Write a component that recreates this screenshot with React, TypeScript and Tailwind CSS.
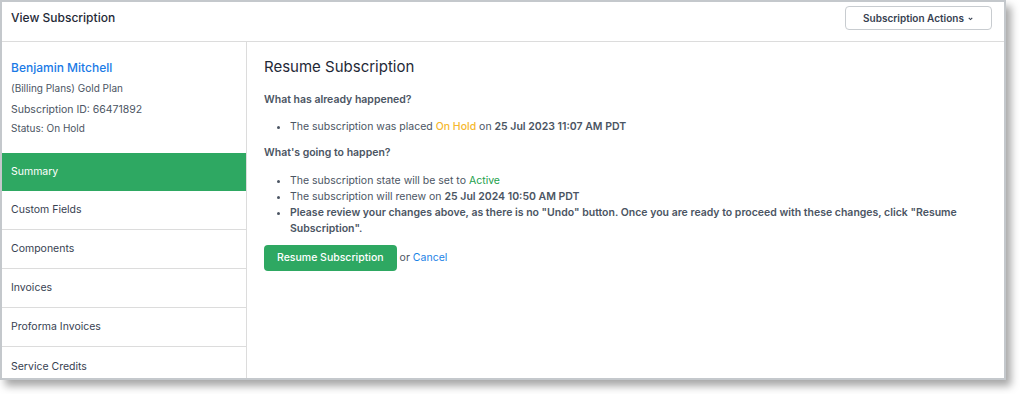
import React from "react";

const font = { fontFamily: "Inter, 'Noto Sans', sans-serif" };

function Sidebar() {
  const items = ["Custom Fields", "Components", "Invoices", "Proforma Invoices", "Service Credits"];
  return (
    <div className="w-[245px] shrink-0 border-r border-[#dcdcdc] flex flex-col">
      <div className="pl-[9px] pt-[17px] h-[111px]">
        <div className="text-[12px] leading-[18px] font-medium text-[#1a7ae6]">Benjamin Mitchell</div>
        <div className="text-[10px] leading-[14px] text-[#4b5563] mt-[4px]">(Billing Plans) Gold Plan</div>
        <div className="text-[10.5px] leading-[16px] text-[#4b5563] mt-[7px]">Subscription ID: 66471892</div>
        <div className="text-[10px] leading-[16px] text-[#4b5563] mt-[2px]">Status: On Hold</div>
      </div>
      <div className="h-[38px] bg-[#2ea862] text-white text-[10.5px] flex items-center pl-[9px]">Summary</div>
      {items.map((it) => (
        <div key={it} className="h-[39px] border-b border-[#dcdcdc] text-[10.5px] text-[#374151] flex items-center pl-[9px] last:border-b-0">
          {it}
        </div>
      ))}
    </div>
  );
}

function Main() {
  return (
    <div className="flex-1 pl-[17px] pt-[14px] text-[#4b5563]">
      <div className="text-[15px] leading-[22px] text-[#1f2937]">Resume Subscription</div>
      <div className="text-[10.5px] font-semibold mt-[14px] leading-[16px]">What has already happened?</div>
      <ul className="list-disc pl-[26px] mt-[11px] text-[10.5px] leading-[16px]">
        <li>
          The subscription was placed <span className="text-[#f5b82e] font-medium">On Hold</span> on{" "}
          <span className="font-semibold">25 Jul 2023 11:07 AM PDT</span>
        </li>
      </ul>
      <div className="text-[10.5px] font-semibold mt-[10px] leading-[16px]">What's going to happen?</div>
      <ul className="list-disc pl-[26px] mt-[12px] text-[10.5px] leading-[16px]">
        <li>
          The subscription state will be set to <span className="text-[#22a04b]">Active</span>
        </li>
        <li>
          The subscription will renew on <span className="font-semibold">25 Jul 2024 10:50 AM PDT</span>
        </li>
        <li className="font-semibold pr-[40px]">
          Please review your changes above, as there is no "Undo" button. Once you are ready to proceed with these changes, click "Resume Subscription".
        </li>
      </ul>
      <div className="flex items-center mt-[8px]">
        <button className="h-[26px] px-[13px] rounded-[4px] bg-[#2ea862] text-white text-[10.5px] font-medium">
          Resume Subscription
        </button>
        <span className="text-[10.5px] ml-[3px]">or</span>
        <span className="text-[10.5px] ml-[3px] text-[#1a82e6]">Cancel</span>
      </div>
    </div>
  );
}

export default function App() {
  return (
    <div className="w-[1020px] h-[394px] bg-white relative" style={font}>
      <div className="w-[1006px] h-[380px] border-2 border-[#c4c8cc] bg-white shadow-[5px_6px_8px_rgba(0,0,0,0.35)] flex flex-col overflow-hidden">
        <div className="h-[40px] shrink-0 border-b border-[#dcdcdc] flex items-center justify-between pl-[9px] pr-[12px]">
          <div className="text-[12px] font-medium text-[#1f2937] -mt-[7px]">View Subscription</div>
          <button className="h-[24px] w-[147px] -mt-[7px] border border-[#c8ccd0] rounded-[4px] text-[10px] font-semibold text-[#374151] flex items-center justify-center gap-[3px]">
            Subscription Actions
            <svg width="7" height="7" viewBox="0 0 10 10" fill="none" stroke="#374151" strokeWidth="1.6">
              <path d="M2.5 4 L5 6.5 L7.5 4" />
            </svg>
          </button>
        </div>
        <div className="flex flex-1">
          <Sidebar />
          <Main />
        </div>
      </div>
    </div>
  );
}
